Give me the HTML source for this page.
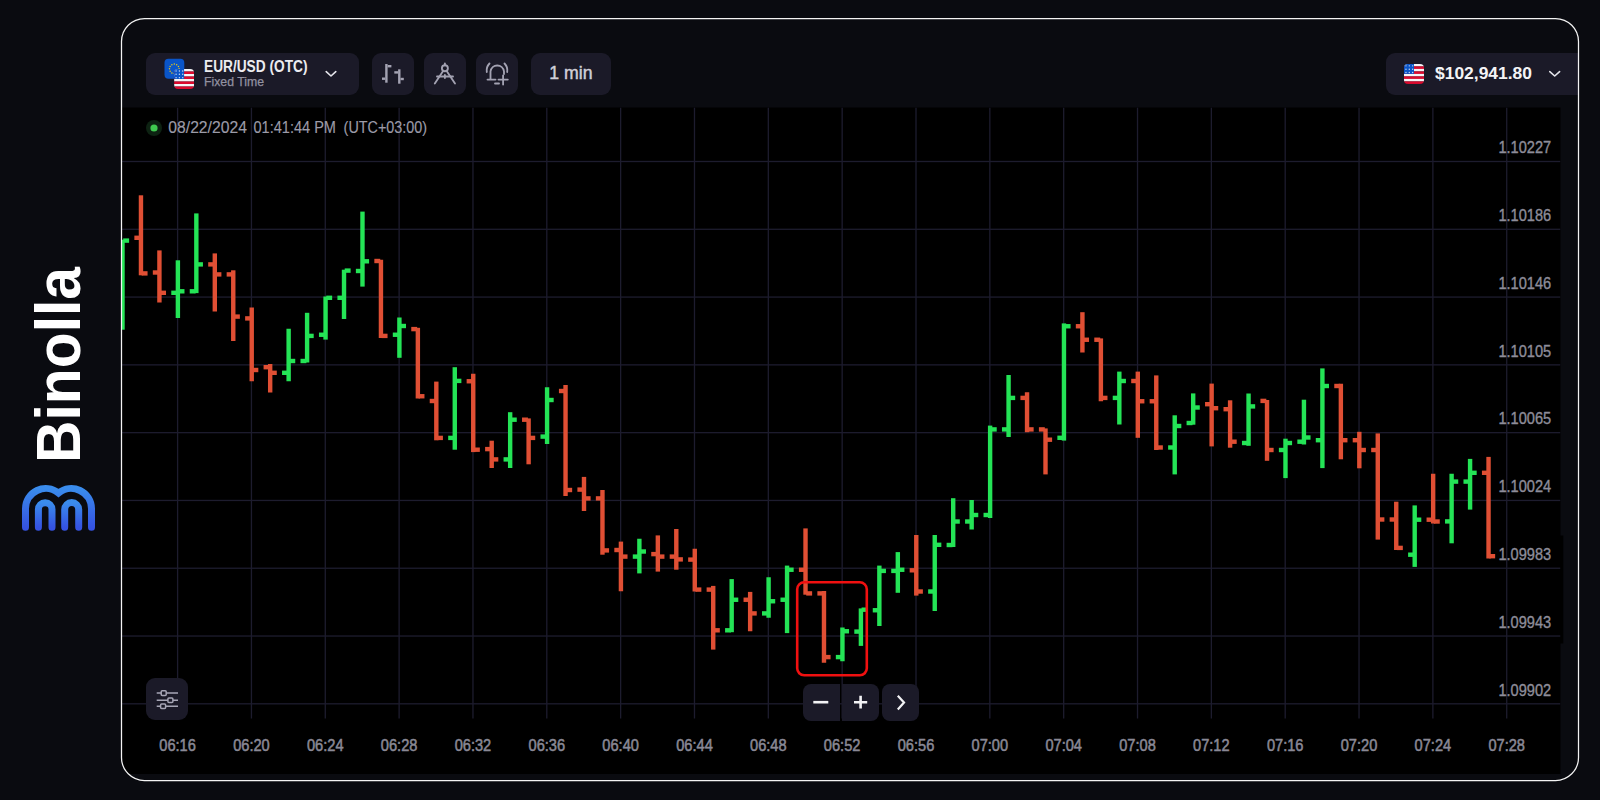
<!DOCTYPE html><html><head><meta charset="utf-8"><style>
html,body{margin:0;padding:0;width:1600px;height:800px;overflow:hidden;background:#0a0b10}
svg{display:block}text{font-family:"Liberation Sans", sans-serif}
</style></head><body>
<svg width="1600" height="800" viewBox="0 0 1600 800">
<defs>
<linearGradient id="lg" x1="0" y1="0" x2="0" y2="1"><stop offset="0" stop-color="#3a8cec"/><stop offset="1" stop-color="#3553e2"/></linearGradient>
<clipPath id="frameclip"><rect x="121.5" y="18.5" width="1457" height="762" rx="23" ry="23"/></clipPath>
<clipPath id="chartclip"><rect x="122" y="107.5" width="1438.5" height="666.5"/></clipPath>
</defs>
<rect width="1600" height="800" fill="#0a0b10"/>
<text x="0" y="0" transform="translate(80.4,463) rotate(-90)" font-size="63" font-weight="bold" fill="#ffffff" textLength="196" lengthAdjust="spacingAndGlyphs">Binolla</text>
<g fill="none" stroke="url(#lg)" stroke-width="7" stroke-linecap="round">
<path d="M25.5,527.3 L25.5,508.77 A20.27,20.27 0 0 1 58.5,493 A20.27,20.27 0 0 1 91.5,508.77 L91.5,527.3"/>
<path d="M38.4,527.3 V509.6 A6.8,6.8 0 0 1 52,509.6 V527.3"/>
<path d="M64.7,527.3 V509.6 A7,7 0 0 1 78.7,509.6 V527.3"/>
</g>
<g clip-path="url(#frameclip)">
<rect x="121.5" y="18.5" width="1457" height="762" fill="#0a0b10"/>
<rect x="122" y="107.5" width="1438.5" height="666.5" fill="#000"/>
<rect x="1560" y="535.5" width="3.3" height="108" fill="#000"/>
<g clip-path="url(#chartclip)">
<rect x="122" y="160.85" width="1438.5" height="1.3" fill="#1d1c2e"/>
<rect x="122" y="228.64" width="1438.5" height="1.3" fill="#1d1c2e"/>
<rect x="122" y="296.43" width="1438.5" height="1.3" fill="#1d1c2e"/>
<rect x="122" y="364.22" width="1438.5" height="1.3" fill="#1d1c2e"/>
<rect x="122" y="432.01" width="1438.5" height="1.3" fill="#1d1c2e"/>
<rect x="122" y="499.80" width="1438.5" height="1.3" fill="#1d1c2e"/>
<rect x="122" y="567.59" width="1438.5" height="1.3" fill="#1d1c2e"/>
<rect x="122" y="635.38" width="1438.5" height="1.3" fill="#1d1c2e"/>
<rect x="122" y="703.17" width="1438.5" height="1.3" fill="#1d1c2e"/>
<rect x="176.95" y="107.5" width="1.3" height="611" fill="#1d1c2e"/>
<rect x="250.79" y="107.5" width="1.3" height="611" fill="#1d1c2e"/>
<rect x="324.63" y="107.5" width="1.3" height="611" fill="#1d1c2e"/>
<rect x="398.47" y="107.5" width="1.3" height="611" fill="#1d1c2e"/>
<rect x="472.31" y="107.5" width="1.3" height="611" fill="#1d1c2e"/>
<rect x="546.15" y="107.5" width="1.3" height="611" fill="#1d1c2e"/>
<rect x="619.99" y="107.5" width="1.3" height="611" fill="#1d1c2e"/>
<rect x="693.83" y="107.5" width="1.3" height="611" fill="#1d1c2e"/>
<rect x="767.67" y="107.5" width="1.3" height="611" fill="#1d1c2e"/>
<rect x="841.51" y="107.5" width="1.3" height="611" fill="#1d1c2e"/>
<rect x="915.35" y="107.5" width="1.3" height="611" fill="#1d1c2e"/>
<rect x="989.19" y="107.5" width="1.3" height="611" fill="#1d1c2e"/>
<rect x="1063.03" y="107.5" width="1.3" height="611" fill="#1d1c2e"/>
<rect x="1136.87" y="107.5" width="1.3" height="611" fill="#1d1c2e"/>
<rect x="1210.71" y="107.5" width="1.3" height="611" fill="#1d1c2e"/>
<rect x="1284.55" y="107.5" width="1.3" height="611" fill="#1d1c2e"/>
<rect x="1358.39" y="107.5" width="1.3" height="611" fill="#1d1c2e"/>
<rect x="1432.23" y="107.5" width="1.3" height="611" fill="#1d1c2e"/>
<rect x="1506.07" y="107.5" width="1.3" height="611" fill="#1d1c2e"/>
<g fill="#24e456">
<rect x="120.30" y="239.70" width="4.40" height="90.00"/>
<rect x="115.90" y="319.80" width="5.90" height="4.40"/>
<rect x="123.20" y="238.40" width="5.90" height="4.40"/>
</g>
<g fill="#e04f34">
<rect x="138.76" y="195.30" width="4.40" height="80.00"/>
<rect x="134.36" y="235.60" width="5.90" height="4.40"/>
<rect x="141.66" y="271.20" width="5.90" height="4.40"/>
</g>
<g fill="#e04f34">
<rect x="157.22" y="250.40" width="4.40" height="52.10"/>
<rect x="152.82" y="270.30" width="5.90" height="4.40"/>
<rect x="160.12" y="290.60" width="5.90" height="4.40"/>
</g>
<g fill="#24e456">
<rect x="175.68" y="260.30" width="4.40" height="57.70"/>
<rect x="171.28" y="290.60" width="5.90" height="4.40"/>
<rect x="178.58" y="289.10" width="5.90" height="4.40"/>
</g>
<g fill="#24e456">
<rect x="194.14" y="213.40" width="4.40" height="79.70"/>
<rect x="189.74" y="289.10" width="5.90" height="4.40"/>
<rect x="197.04" y="262.20" width="5.90" height="4.40"/>
</g>
<g fill="#e04f34">
<rect x="212.60" y="253.40" width="4.40" height="58.10"/>
<rect x="208.20" y="262.20" width="5.90" height="4.40"/>
<rect x="215.50" y="272.20" width="5.90" height="4.40"/>
</g>
<g fill="#e04f34">
<rect x="231.06" y="270.30" width="4.40" height="70.70"/>
<rect x="226.66" y="272.20" width="5.90" height="4.40"/>
<rect x="233.96" y="314.40" width="5.90" height="4.40"/>
</g>
<g fill="#e04f34">
<rect x="249.52" y="307.50" width="4.40" height="73.75"/>
<rect x="245.12" y="316.20" width="5.90" height="4.40"/>
<rect x="252.42" y="367.80" width="5.90" height="4.40"/>
</g>
<g fill="#e04f34">
<rect x="267.98" y="364.00" width="4.40" height="28.50"/>
<rect x="263.58" y="365.00" width="5.90" height="4.40"/>
<rect x="270.88" y="370.60" width="5.90" height="4.40"/>
</g>
<g fill="#24e456">
<rect x="286.44" y="328.75" width="4.40" height="52.50"/>
<rect x="282.04" y="370.60" width="5.90" height="4.40"/>
<rect x="289.34" y="358.80" width="5.90" height="4.40"/>
</g>
<g fill="#24e456">
<rect x="304.90" y="312.80" width="4.40" height="49.70"/>
<rect x="300.50" y="358.80" width="5.90" height="4.40"/>
<rect x="307.80" y="333.70" width="5.90" height="4.40"/>
</g>
<g fill="#24e456">
<rect x="323.36" y="296.50" width="4.40" height="43.10"/>
<rect x="318.96" y="332.55" width="5.90" height="4.40"/>
<rect x="326.26" y="295.60" width="5.90" height="4.40"/>
</g>
<g fill="#24e456">
<rect x="341.82" y="269.70" width="4.40" height="49.30"/>
<rect x="337.42" y="295.60" width="5.90" height="4.40"/>
<rect x="344.72" y="268.40" width="5.90" height="4.40"/>
</g>
<g fill="#24e456">
<rect x="360.28" y="211.60" width="4.40" height="75.00"/>
<rect x="355.88" y="268.80" width="5.90" height="4.40"/>
<rect x="363.18" y="259.10" width="5.90" height="4.40"/>
</g>
<g fill="#e04f34">
<rect x="378.74" y="259.75" width="4.40" height="78.25"/>
<rect x="374.34" y="258.80" width="5.90" height="4.40"/>
<rect x="381.64" y="333.70" width="5.90" height="4.40"/>
</g>
<g fill="#24e456">
<rect x="397.20" y="317.50" width="4.40" height="40.30"/>
<rect x="392.80" y="332.55" width="5.90" height="4.40"/>
<rect x="400.10" y="323.80" width="5.90" height="4.40"/>
</g>
<g fill="#e04f34">
<rect x="415.66" y="327.80" width="4.40" height="70.70"/>
<rect x="411.26" y="326.90" width="5.90" height="4.40"/>
<rect x="418.56" y="394.05" width="5.90" height="4.40"/>
</g>
<g fill="#e04f34">
<rect x="434.12" y="381.60" width="4.40" height="58.70"/>
<rect x="429.72" y="398.80" width="5.90" height="4.40"/>
<rect x="437.02" y="435.70" width="5.90" height="4.40"/>
</g>
<g fill="#24e456">
<rect x="452.58" y="367.20" width="4.40" height="82.50"/>
<rect x="448.18" y="435.70" width="5.90" height="4.40"/>
<rect x="455.48" y="378.70" width="5.90" height="4.40"/>
</g>
<g fill="#e04f34">
<rect x="471.04" y="373.75" width="4.40" height="78.35"/>
<rect x="466.64" y="379.05" width="5.90" height="4.40"/>
<rect x="473.94" y="447.50" width="5.90" height="4.40"/>
</g>
<g fill="#e04f34">
<rect x="489.50" y="440.70" width="4.40" height="27.30"/>
<rect x="485.10" y="446.90" width="5.90" height="4.40"/>
<rect x="492.40" y="457.20" width="5.90" height="4.40"/>
</g>
<g fill="#24e456">
<rect x="507.96" y="412.20" width="4.40" height="55.80"/>
<rect x="503.56" y="457.20" width="5.90" height="4.40"/>
<rect x="510.86" y="417.50" width="5.90" height="4.40"/>
</g>
<g fill="#e04f34">
<rect x="526.42" y="418.40" width="4.40" height="45.90"/>
<rect x="522.02" y="417.50" width="5.90" height="4.40"/>
<rect x="529.32" y="435.70" width="5.90" height="4.40"/>
</g>
<g fill="#24e456">
<rect x="544.88" y="387.25" width="4.40" height="56.75"/>
<rect x="540.48" y="434.40" width="5.90" height="4.40"/>
<rect x="547.78" y="397.80" width="5.90" height="4.40"/>
</g>
<g fill="#e04f34">
<rect x="563.34" y="385.00" width="4.40" height="111.00"/>
<rect x="558.94" y="388.80" width="5.90" height="4.40"/>
<rect x="566.24" y="487.80" width="5.90" height="4.40"/>
</g>
<g fill="#e04f34">
<rect x="581.80" y="476.90" width="4.40" height="34.10"/>
<rect x="577.40" y="487.40" width="5.90" height="4.40"/>
<rect x="584.70" y="496.20" width="5.90" height="4.40"/>
</g>
<g fill="#e04f34">
<rect x="600.26" y="490.00" width="4.40" height="64.70"/>
<rect x="595.86" y="496.20" width="5.90" height="4.40"/>
<rect x="603.16" y="548.20" width="5.90" height="4.40"/>
</g>
<g fill="#e04f34">
<rect x="618.72" y="541.60" width="4.40" height="49.65"/>
<rect x="614.32" y="547.80" width="5.90" height="4.40"/>
<rect x="621.62" y="554.40" width="5.90" height="4.40"/>
</g>
<g fill="#24e456">
<rect x="637.18" y="538.75" width="4.40" height="34.65"/>
<rect x="632.78" y="554.40" width="5.90" height="4.40"/>
<rect x="640.08" y="549.30" width="5.90" height="4.40"/>
</g>
<g fill="#e04f34">
<rect x="655.64" y="535.40" width="4.40" height="36.20"/>
<rect x="651.24" y="551.90" width="5.90" height="4.40"/>
<rect x="658.54" y="554.40" width="5.90" height="4.40"/>
</g>
<g fill="#e04f34">
<rect x="674.10" y="529.00" width="4.40" height="40.70"/>
<rect x="669.70" y="554.40" width="5.90" height="4.40"/>
<rect x="677.00" y="557.20" width="5.90" height="4.40"/>
</g>
<g fill="#e04f34">
<rect x="692.56" y="548.75" width="4.40" height="42.75"/>
<rect x="688.16" y="557.40" width="5.90" height="4.40"/>
<rect x="695.46" y="587.40" width="5.90" height="4.40"/>
</g>
<g fill="#e04f34">
<rect x="711.02" y="585.90" width="4.40" height="63.70"/>
<rect x="706.62" y="587.40" width="5.90" height="4.40"/>
<rect x="713.92" y="628.10" width="5.90" height="4.40"/>
</g>
<g fill="#24e456">
<rect x="729.48" y="579.10" width="4.40" height="53.10"/>
<rect x="725.08" y="628.10" width="5.90" height="4.40"/>
<rect x="732.38" y="597.55" width="5.90" height="4.40"/>
</g>
<g fill="#e04f34">
<rect x="747.94" y="591.90" width="4.40" height="39.35"/>
<rect x="743.54" y="597.55" width="5.90" height="4.40"/>
<rect x="750.84" y="611.20" width="5.90" height="4.40"/>
</g>
<g fill="#24e456">
<rect x="766.40" y="577.25" width="4.40" height="40.50"/>
<rect x="762.00" y="611.20" width="5.90" height="4.40"/>
<rect x="769.30" y="599.05" width="5.90" height="4.40"/>
</g>
<g fill="#24e456">
<rect x="784.86" y="565.60" width="4.40" height="67.50"/>
<rect x="780.46" y="597.55" width="5.90" height="4.40"/>
<rect x="787.76" y="567.55" width="5.90" height="4.40"/>
</g>
<g fill="#e04f34">
<rect x="803.32" y="528.40" width="4.40" height="66.30"/>
<rect x="798.92" y="567.55" width="5.90" height="4.40"/>
<rect x="806.22" y="591.20" width="5.90" height="4.40"/>
</g>
<g fill="#e04f34">
<rect x="821.78" y="591.00" width="4.40" height="71.75"/>
<rect x="817.38" y="591.20" width="5.90" height="4.40"/>
<rect x="824.68" y="654.90" width="5.90" height="4.40"/>
</g>
<g fill="#24e456">
<rect x="840.24" y="627.50" width="4.40" height="33.75"/>
<rect x="835.84" y="654.90" width="5.90" height="4.40"/>
<rect x="843.14" y="629.05" width="5.90" height="4.40"/>
</g>
<g fill="#24e456">
<rect x="858.70" y="608.40" width="4.40" height="37.50"/>
<rect x="854.30" y="629.40" width="5.90" height="4.40"/>
<rect x="861.60" y="607.50" width="5.90" height="4.40"/>
</g>
<g fill="#24e456">
<rect x="877.16" y="565.60" width="4.40" height="60.40"/>
<rect x="872.76" y="608.05" width="5.90" height="4.40"/>
<rect x="880.06" y="568.70" width="5.90" height="4.40"/>
</g>
<g fill="#24e456">
<rect x="895.62" y="552.10" width="4.40" height="40.70"/>
<rect x="891.22" y="568.70" width="5.90" height="4.40"/>
<rect x="898.52" y="567.55" width="5.90" height="4.40"/>
</g>
<g fill="#e04f34">
<rect x="914.08" y="535.00" width="4.40" height="60.60"/>
<rect x="909.68" y="568.10" width="5.90" height="4.40"/>
<rect x="916.98" y="589.30" width="5.90" height="4.40"/>
</g>
<g fill="#24e456">
<rect x="932.54" y="535.00" width="4.40" height="76.00"/>
<rect x="928.14" y="589.30" width="5.90" height="4.40"/>
<rect x="935.44" y="542.60" width="5.90" height="4.40"/>
</g>
<g fill="#24e456">
<rect x="951.00" y="498.20" width="4.40" height="48.80"/>
<rect x="946.60" y="542.80" width="5.90" height="4.40"/>
<rect x="953.90" y="519.30" width="5.90" height="4.40"/>
</g>
<g fill="#24e456">
<rect x="969.46" y="500.00" width="4.40" height="29.50"/>
<rect x="965.06" y="519.30" width="5.90" height="4.40"/>
<rect x="972.36" y="512.80" width="5.90" height="4.40"/>
</g>
<g fill="#24e456">
<rect x="987.92" y="425.60" width="4.40" height="92.40"/>
<rect x="983.52" y="512.80" width="5.90" height="4.40"/>
<rect x="990.82" y="427.20" width="5.90" height="4.40"/>
</g>
<g fill="#24e456">
<rect x="1006.38" y="375.00" width="4.40" height="62.00"/>
<rect x="1001.98" y="427.20" width="5.90" height="4.40"/>
<rect x="1009.28" y="395.70" width="5.90" height="4.40"/>
</g>
<g fill="#e04f34">
<rect x="1024.84" y="392.25" width="4.40" height="39.95"/>
<rect x="1020.44" y="395.70" width="5.90" height="4.40"/>
<rect x="1027.74" y="427.20" width="5.90" height="4.40"/>
</g>
<g fill="#e04f34">
<rect x="1043.30" y="428.40" width="4.40" height="46.00"/>
<rect x="1038.90" y="427.20" width="5.90" height="4.40"/>
<rect x="1046.20" y="437.50" width="5.90" height="4.40"/>
</g>
<g fill="#24e456">
<rect x="1061.76" y="323.40" width="4.40" height="117.20"/>
<rect x="1057.36" y="435.60" width="5.90" height="4.40"/>
<rect x="1064.66" y="324.05" width="5.90" height="4.40"/>
</g>
<g fill="#e04f34">
<rect x="1080.22" y="312.20" width="4.40" height="40.30"/>
<rect x="1075.82" y="324.05" width="5.90" height="4.40"/>
<rect x="1083.12" y="337.55" width="5.90" height="4.40"/>
</g>
<g fill="#e04f34">
<rect x="1098.68" y="338.40" width="4.40" height="62.85"/>
<rect x="1094.28" y="337.55" width="5.90" height="4.40"/>
<rect x="1101.58" y="395.70" width="5.90" height="4.40"/>
</g>
<g fill="#24e456">
<rect x="1117.14" y="371.60" width="4.40" height="52.90"/>
<rect x="1112.74" y="395.70" width="5.90" height="4.40"/>
<rect x="1120.04" y="378.80" width="5.90" height="4.40"/>
</g>
<g fill="#e04f34">
<rect x="1135.60" y="371.60" width="4.40" height="66.20"/>
<rect x="1131.20" y="378.80" width="5.90" height="4.40"/>
<rect x="1138.50" y="399.05" width="5.90" height="4.40"/>
</g>
<g fill="#e04f34">
<rect x="1154.06" y="375.40" width="4.40" height="74.60"/>
<rect x="1149.66" y="399.05" width="5.90" height="4.40"/>
<rect x="1156.96" y="445.30" width="5.90" height="4.40"/>
</g>
<g fill="#24e456">
<rect x="1172.52" y="415.30" width="4.40" height="59.10"/>
<rect x="1168.12" y="445.30" width="5.90" height="4.40"/>
<rect x="1175.42" y="423.80" width="5.90" height="4.40"/>
</g>
<g fill="#24e456">
<rect x="1190.98" y="393.40" width="4.40" height="31.30"/>
<rect x="1186.58" y="420.80" width="5.90" height="4.40"/>
<rect x="1193.88" y="405.30" width="5.90" height="4.40"/>
</g>
<g fill="#e04f34">
<rect x="1209.44" y="383.60" width="4.40" height="62.80"/>
<rect x="1205.04" y="402.00" width="5.90" height="4.40"/>
<rect x="1212.34" y="406.00" width="5.90" height="4.40"/>
</g>
<g fill="#e04f34">
<rect x="1227.90" y="400.30" width="4.40" height="47.40"/>
<rect x="1223.50" y="407.00" width="5.90" height="4.40"/>
<rect x="1230.80" y="439.50" width="5.90" height="4.40"/>
</g>
<g fill="#24e456">
<rect x="1246.36" y="393.50" width="4.40" height="52.30"/>
<rect x="1241.96" y="440.80" width="5.90" height="4.40"/>
<rect x="1249.26" y="404.20" width="5.90" height="4.40"/>
</g>
<g fill="#e04f34">
<rect x="1264.82" y="400.00" width="4.40" height="60.80"/>
<rect x="1260.42" y="398.70" width="5.90" height="4.40"/>
<rect x="1267.72" y="447.80" width="5.90" height="4.40"/>
</g>
<g fill="#24e456">
<rect x="1283.28" y="438.70" width="4.40" height="39.40"/>
<rect x="1278.88" y="447.80" width="5.90" height="4.40"/>
<rect x="1286.18" y="440.80" width="5.90" height="4.40"/>
</g>
<g fill="#24e456">
<rect x="1301.74" y="399.70" width="4.40" height="44.80"/>
<rect x="1297.34" y="439.50" width="5.90" height="4.40"/>
<rect x="1304.64" y="435.30" width="5.90" height="4.40"/>
</g>
<g fill="#24e456">
<rect x="1320.20" y="368.40" width="4.40" height="99.70"/>
<rect x="1315.80" y="438.00" width="5.90" height="4.40"/>
<rect x="1323.10" y="383.80" width="5.90" height="4.40"/>
</g>
<g fill="#e04f34">
<rect x="1338.66" y="383.75" width="4.40" height="75.55"/>
<rect x="1334.26" y="383.80" width="5.90" height="4.40"/>
<rect x="1341.56" y="438.00" width="5.90" height="4.40"/>
</g>
<g fill="#e04f34">
<rect x="1357.12" y="431.80" width="4.40" height="36.50"/>
<rect x="1352.72" y="438.00" width="5.90" height="4.40"/>
<rect x="1360.02" y="447.80" width="5.90" height="4.40"/>
</g>
<g fill="#e04f34">
<rect x="1375.58" y="433.40" width="4.40" height="106.20"/>
<rect x="1371.18" y="447.80" width="5.90" height="4.40"/>
<rect x="1378.48" y="517.30" width="5.90" height="4.40"/>
</g>
<g fill="#e04f34">
<rect x="1394.04" y="501.70" width="4.40" height="48.30"/>
<rect x="1389.64" y="517.30" width="5.90" height="4.40"/>
<rect x="1396.94" y="545.70" width="5.90" height="4.40"/>
</g>
<g fill="#24e456">
<rect x="1412.50" y="505.40" width="4.40" height="61.50"/>
<rect x="1408.10" y="552.50" width="5.90" height="4.40"/>
<rect x="1415.40" y="517.50" width="5.90" height="4.40"/>
</g>
<g fill="#e04f34">
<rect x="1430.96" y="473.75" width="4.40" height="49.75"/>
<rect x="1426.56" y="517.50" width="5.90" height="4.40"/>
<rect x="1433.86" y="519.30" width="5.90" height="4.40"/>
</g>
<g fill="#24e456">
<rect x="1449.42" y="473.75" width="4.40" height="69.55"/>
<rect x="1445.02" y="519.20" width="5.90" height="4.40"/>
<rect x="1452.32" y="479.40" width="5.90" height="4.40"/>
</g>
<g fill="#24e456">
<rect x="1467.88" y="458.90" width="4.40" height="50.70"/>
<rect x="1463.48" y="479.40" width="5.90" height="4.40"/>
<rect x="1470.78" y="470.60" width="5.90" height="4.40"/>
</g>
<g fill="#e04f34">
<rect x="1486.34" y="456.90" width="4.40" height="101.60"/>
<rect x="1481.94" y="470.60" width="5.90" height="4.40"/>
<rect x="1489.24" y="554.00" width="5.90" height="4.40"/>
</g>
</g>
<rect x="797.2" y="582.3" width="69.6" height="93" rx="7" fill="none" stroke="#f01010" stroke-width="2.6"/>
<text x="1551.2" y="153.20" font-size="16.5" fill="#8e8d9a" stroke="#8e8d9a" stroke-width="0.35" text-anchor="end" textLength="52.8" lengthAdjust="spacingAndGlyphs">1.10227</text>
<text x="1551.2" y="220.99" font-size="16.5" fill="#8e8d9a" stroke="#8e8d9a" stroke-width="0.35" text-anchor="end" textLength="52.8" lengthAdjust="spacingAndGlyphs">1.10186</text>
<text x="1551.2" y="288.78" font-size="16.5" fill="#8e8d9a" stroke="#8e8d9a" stroke-width="0.35" text-anchor="end" textLength="52.8" lengthAdjust="spacingAndGlyphs">1.10146</text>
<text x="1551.2" y="356.57" font-size="16.5" fill="#8e8d9a" stroke="#8e8d9a" stroke-width="0.35" text-anchor="end" textLength="52.8" lengthAdjust="spacingAndGlyphs">1.10105</text>
<text x="1551.2" y="424.36" font-size="16.5" fill="#8e8d9a" stroke="#8e8d9a" stroke-width="0.35" text-anchor="end" textLength="52.8" lengthAdjust="spacingAndGlyphs">1.10065</text>
<text x="1551.2" y="492.15" font-size="16.5" fill="#8e8d9a" stroke="#8e8d9a" stroke-width="0.35" text-anchor="end" textLength="52.8" lengthAdjust="spacingAndGlyphs">1.10024</text>
<text x="1551.2" y="559.94" font-size="16.5" fill="#8e8d9a" stroke="#8e8d9a" stroke-width="0.35" text-anchor="end" textLength="52.8" lengthAdjust="spacingAndGlyphs">1.09983</text>
<text x="1551.2" y="627.73" font-size="16.5" fill="#8e8d9a" stroke="#8e8d9a" stroke-width="0.35" text-anchor="end" textLength="52.8" lengthAdjust="spacingAndGlyphs">1.09943</text>
<text x="1551.2" y="695.52" font-size="16.5" fill="#8e8d9a" stroke="#8e8d9a" stroke-width="0.35" text-anchor="end" textLength="52.8" lengthAdjust="spacingAndGlyphs">1.09902</text>
<text x="177.60" y="751.4" font-size="15.6" fill="#8a8996" stroke="#8a8996" stroke-width="0.5" text-anchor="middle" textLength="36.6" lengthAdjust="spacingAndGlyphs">06:16</text>
<text x="251.44" y="751.4" font-size="15.6" fill="#8a8996" stroke="#8a8996" stroke-width="0.5" text-anchor="middle" textLength="36.6" lengthAdjust="spacingAndGlyphs">06:20</text>
<text x="325.28" y="751.4" font-size="15.6" fill="#8a8996" stroke="#8a8996" stroke-width="0.5" text-anchor="middle" textLength="36.6" lengthAdjust="spacingAndGlyphs">06:24</text>
<text x="399.12" y="751.4" font-size="15.6" fill="#8a8996" stroke="#8a8996" stroke-width="0.5" text-anchor="middle" textLength="36.6" lengthAdjust="spacingAndGlyphs">06:28</text>
<text x="472.96" y="751.4" font-size="15.6" fill="#8a8996" stroke="#8a8996" stroke-width="0.5" text-anchor="middle" textLength="36.6" lengthAdjust="spacingAndGlyphs">06:32</text>
<text x="546.80" y="751.4" font-size="15.6" fill="#8a8996" stroke="#8a8996" stroke-width="0.5" text-anchor="middle" textLength="36.6" lengthAdjust="spacingAndGlyphs">06:36</text>
<text x="620.64" y="751.4" font-size="15.6" fill="#8a8996" stroke="#8a8996" stroke-width="0.5" text-anchor="middle" textLength="36.6" lengthAdjust="spacingAndGlyphs">06:40</text>
<text x="694.48" y="751.4" font-size="15.6" fill="#8a8996" stroke="#8a8996" stroke-width="0.5" text-anchor="middle" textLength="36.6" lengthAdjust="spacingAndGlyphs">06:44</text>
<text x="768.32" y="751.4" font-size="15.6" fill="#8a8996" stroke="#8a8996" stroke-width="0.5" text-anchor="middle" textLength="36.6" lengthAdjust="spacingAndGlyphs">06:48</text>
<text x="842.16" y="751.4" font-size="15.6" fill="#8a8996" stroke="#8a8996" stroke-width="0.5" text-anchor="middle" textLength="36.6" lengthAdjust="spacingAndGlyphs">06:52</text>
<text x="916.00" y="751.4" font-size="15.6" fill="#8a8996" stroke="#8a8996" stroke-width="0.5" text-anchor="middle" textLength="36.6" lengthAdjust="spacingAndGlyphs">06:56</text>
<text x="989.84" y="751.4" font-size="15.6" fill="#8a8996" stroke="#8a8996" stroke-width="0.5" text-anchor="middle" textLength="36.6" lengthAdjust="spacingAndGlyphs">07:00</text>
<text x="1063.68" y="751.4" font-size="15.6" fill="#8a8996" stroke="#8a8996" stroke-width="0.5" text-anchor="middle" textLength="36.6" lengthAdjust="spacingAndGlyphs">07:04</text>
<text x="1137.52" y="751.4" font-size="15.6" fill="#8a8996" stroke="#8a8996" stroke-width="0.5" text-anchor="middle" textLength="36.6" lengthAdjust="spacingAndGlyphs">07:08</text>
<text x="1211.36" y="751.4" font-size="15.6" fill="#8a8996" stroke="#8a8996" stroke-width="0.5" text-anchor="middle" textLength="36.6" lengthAdjust="spacingAndGlyphs">07:12</text>
<text x="1285.20" y="751.4" font-size="15.6" fill="#8a8996" stroke="#8a8996" stroke-width="0.5" text-anchor="middle" textLength="36.6" lengthAdjust="spacingAndGlyphs">07:16</text>
<text x="1359.04" y="751.4" font-size="15.6" fill="#8a8996" stroke="#8a8996" stroke-width="0.5" text-anchor="middle" textLength="36.6" lengthAdjust="spacingAndGlyphs">07:20</text>
<text x="1432.88" y="751.4" font-size="15.6" fill="#8a8996" stroke="#8a8996" stroke-width="0.5" text-anchor="middle" textLength="36.6" lengthAdjust="spacingAndGlyphs">07:24</text>
<text x="1506.72" y="751.4" font-size="15.6" fill="#8a8996" stroke="#8a8996" stroke-width="0.5" text-anchor="middle" textLength="36.6" lengthAdjust="spacingAndGlyphs">07:28</text>
<circle cx="154" cy="128" r="8" fill="#0d2212"/>
<circle cx="154" cy="128" r="3.6" fill="#3fc94f"/>
<text x="168.30" y="132.6" font-size="16" fill="#9c9ba8" stroke="#9c9ba8" stroke-width="0.15" textLength="78.60" lengthAdjust="spacingAndGlyphs">08/22/2024</text>
<text x="253.50" y="132.6" font-size="16" fill="#9c9ba8" stroke="#9c9ba8" stroke-width="0.15" textLength="82.50" lengthAdjust="spacingAndGlyphs">01:41:44 PM</text>
<text x="343.60" y="132.6" font-size="16" fill="#9c9ba8" stroke="#9c9ba8" stroke-width="0.15" textLength="83.40" lengthAdjust="spacingAndGlyphs">(UTC+03:00)</text>
<rect x="146" y="53" width="213" height="42" rx="9" fill="#1b1a28"/>
<rect x="372" y="53" width="42" height="42" rx="9" fill="#1b1a28"/>
<rect x="424" y="53" width="42" height="42" rx="9" fill="#1b1a28"/>
<rect x="476" y="53" width="42" height="42" rx="9" fill="#1b1a28"/>
<rect x="531" y="53" width="80" height="42" rx="9" fill="#1b1a28"/>
<rect x="1386" y="53" width="205" height="42" rx="9" fill="#1b1a28"/>
<rect x="164.5" y="58.8" width="19.8" height="20" rx="4" fill="#0a55c8"/>
<circle cx="179.10" cy="68.80" r="0.75" fill="#e8c81a"/>
<circle cx="178.46" cy="71.20" r="0.75" fill="#e8c81a"/>
<circle cx="176.70" cy="72.96" r="0.75" fill="#e8c81a"/>
<circle cx="174.30" cy="73.60" r="0.75" fill="#e8c81a"/>
<circle cx="171.90" cy="72.96" r="0.75" fill="#e8c81a"/>
<circle cx="170.14" cy="71.20" r="0.75" fill="#e8c81a"/>
<circle cx="169.50" cy="68.80" r="0.75" fill="#e8c81a"/>
<circle cx="170.14" cy="66.40" r="0.75" fill="#e8c81a"/>
<circle cx="171.90" cy="64.64" r="0.75" fill="#e8c81a"/>
<circle cx="174.30" cy="64.00" r="0.75" fill="#e8c81a"/>
<circle cx="176.70" cy="64.64" r="0.75" fill="#e8c81a"/>
<circle cx="178.46" cy="66.40" r="0.75" fill="#e8c81a"/>
<clipPath id="uf1"><rect x="174.10" y="69.00" width="20.00" height="20.00" rx="4"/></clipPath>
<g clip-path="url(#uf1)">
<rect x="174.10" y="69.00" width="20.00" height="2.55" fill="#f4f6f8"/>
<rect x="174.10" y="71.50" width="20.00" height="2.55" fill="#dc0a2e"/>
<rect x="174.10" y="74.00" width="20.00" height="2.55" fill="#f4f6f8"/>
<rect x="174.10" y="76.50" width="20.00" height="2.55" fill="#dc0a2e"/>
<rect x="174.10" y="79.00" width="20.00" height="2.55" fill="#f4f6f8"/>
<rect x="174.10" y="81.50" width="20.00" height="2.55" fill="#dc0a2e"/>
<rect x="174.10" y="84.00" width="20.00" height="2.55" fill="#f4f6f8"/>
<rect x="174.10" y="86.50" width="20.00" height="2.55" fill="#dc0a2e"/>
<rect x="174.10" y="69.00" width="10.00" height="10.00" fill="#0a55c8"/>
<circle cx="176.07" cy="70.97" r="0.7" fill="#c8d8f0"/>
<circle cx="176.07" cy="74.30" r="0.7" fill="#c8d8f0"/>
<circle cx="176.07" cy="77.63" r="0.7" fill="#c8d8f0"/>
<circle cx="179.40" cy="70.97" r="0.7" fill="#c8d8f0"/>
<circle cx="179.40" cy="74.30" r="0.7" fill="#c8d8f0"/>
<circle cx="179.40" cy="77.63" r="0.7" fill="#c8d8f0"/>
<circle cx="182.73" cy="70.97" r="0.7" fill="#c8d8f0"/>
<circle cx="182.73" cy="74.30" r="0.7" fill="#c8d8f0"/>
<circle cx="182.73" cy="77.63" r="0.7" fill="#c8d8f0"/>
</g>
<clipPath id="uf2"><rect x="1404.00" y="63.90" width="20.00" height="20.00" rx="4"/></clipPath>
<g clip-path="url(#uf2)">
<rect x="1404.00" y="63.90" width="20.00" height="2.55" fill="#f4f6f8"/>
<rect x="1404.00" y="66.40" width="20.00" height="2.55" fill="#dc0a2e"/>
<rect x="1404.00" y="68.90" width="20.00" height="2.55" fill="#f4f6f8"/>
<rect x="1404.00" y="71.40" width="20.00" height="2.55" fill="#dc0a2e"/>
<rect x="1404.00" y="73.90" width="20.00" height="2.55" fill="#f4f6f8"/>
<rect x="1404.00" y="76.40" width="20.00" height="2.55" fill="#dc0a2e"/>
<rect x="1404.00" y="78.90" width="20.00" height="2.55" fill="#f4f6f8"/>
<rect x="1404.00" y="81.40" width="20.00" height="2.55" fill="#dc0a2e"/>
<rect x="1404.00" y="63.90" width="10.00" height="10.00" fill="#0a55c8"/>
<circle cx="1405.97" cy="65.87" r="0.7" fill="#c8d8f0"/>
<circle cx="1405.97" cy="69.20" r="0.7" fill="#c8d8f0"/>
<circle cx="1405.97" cy="72.53" r="0.7" fill="#c8d8f0"/>
<circle cx="1409.30" cy="65.87" r="0.7" fill="#c8d8f0"/>
<circle cx="1409.30" cy="69.20" r="0.7" fill="#c8d8f0"/>
<circle cx="1409.30" cy="72.53" r="0.7" fill="#c8d8f0"/>
<circle cx="1412.63" cy="65.87" r="0.7" fill="#c8d8f0"/>
<circle cx="1412.63" cy="69.20" r="0.7" fill="#c8d8f0"/>
<circle cx="1412.63" cy="72.53" r="0.7" fill="#c8d8f0"/>
</g>
<text x="204" y="71.6" font-size="16" font-weight="bold" fill="#ececf0" textLength="103.5" lengthAdjust="spacingAndGlyphs">EUR/USD (OTC)</text>
<text x="204" y="86.3" font-size="12.5" fill="#9291a0" stroke="#9291a0" stroke-width="0.25" textLength="60" lengthAdjust="spacingAndGlyphs">Fixed Time</text>
<path d="M326.2,71.6 L331,76 L335.8,71.6" fill="none" stroke="#e4e4ea" stroke-width="1.6" stroke-linecap="round" stroke-linejoin="round"/>
<g fill="#a3a2b2">
<rect x="385.2" y="64" width="2.4" height="18.7"/><rect x="387.6" y="65" width="3.8" height="2.4"/><rect x="382" y="77.5" width="3.2" height="2.4"/>
<rect x="398.1" y="69.3" width="2.4" height="14.4"/><rect x="394.3" y="71.2" width="3.8" height="2.4"/><rect x="400.5" y="77.8" width="3.3" height="2.4"/>
</g>
<g fill="none" stroke="#a3a2b2" stroke-width="1.85" stroke-linecap="round">
<circle cx="444.9" cy="68.2" r="3"/><path d="M444.9,63.4 V65.2"/><path d="M443.3,70.8 L434.8,83.6 M446.5,70.8 L455,83.6"/><path d="M437,76.5 H453 M444.9,75 V78"/>
</g>
<g fill="none" stroke="#a3a2b2" stroke-width="1.85" stroke-linecap="round">
<path d="M490.5,79 V71.5 A6.8,6.8 0 0 1 504,71.5 V74"/><path d="M487.5,79.6 H495.5"/><path d="M495,83.5 H499"/><path d="M498.5,79.6 H507.8 M503.1,75.3 V84.6"/>
<path d="M489.5,63.5 A10,10 0 0 0 486.8,72"/><path d="M504.5,63.5 A10,10 0 0 1 507.2,72"/>
</g>
<text x="549.2" y="79" font-size="18" fill="#d0d0d8" stroke="#d0d0d8" stroke-width="0.45" textLength="43.3" lengthAdjust="spacingAndGlyphs">1 min</text>
<text x="1435" y="79.3" font-size="17" font-weight="bold" fill="#f4f4f6" textLength="97" lengthAdjust="spacingAndGlyphs">$102,941.80</text>
<path d="M1549.8,71.6 L1554.7,76 L1559.6,71.6" fill="none" stroke="#e4e4ea" stroke-width="1.6" stroke-linecap="round" stroke-linejoin="round"/>
<path d="M811,684 H840 V721 H811 A8,8 0 0 1 803,713 V692 A8,8 0 0 1 811,684 Z" fill="#1b1a28"/>
<path d="M842,684 H871 A8,8 0 0 1 879,692 V713 A8,8 0 0 1 871,721 H842 Z" fill="#1b1a28"/>
<rect x="882" y="684" width="37" height="37" rx="8" fill="#1b1a28"/>
<g stroke="#f2f2f4" stroke-width="2.6" fill="none" stroke-linecap="butt">
<path d="M813.3,702.2 H828.3"/><path d="M854,702.2 H867.2 M860.6,695.8 V708.6"/>
</g>
<path d="M897.8,695.8 L904,702.6 L897.8,709.4" fill="none" stroke="#f2f2f4" stroke-width="2.2" stroke-linecap="butt"/>
<rect x="146" y="678" width="42" height="42" rx="9" fill="#1b1a28"/>
<g stroke="#a6a5b5" stroke-width="1.5" fill="none">
<path d="M156.7,693.1 H178 M156.7,700.2 H178 M156.7,706.2 H178"/>
</g>
<g fill="#1b1a28" stroke="#a6a5b5" stroke-width="1.5">
<rect x="161.2" y="690.8" width="5" height="4.6" rx="1"/><rect x="167.9" y="697.9" width="5" height="4.6" rx="1"/><rect x="160.6" y="703.9" width="5" height="4.6" rx="1"/>
</g>
</g>
<rect x="121.5" y="18.5" width="1457" height="762" rx="23" ry="23" fill="none" stroke="#f4f4f4" stroke-width="1.25"/>
</svg></body></html>
